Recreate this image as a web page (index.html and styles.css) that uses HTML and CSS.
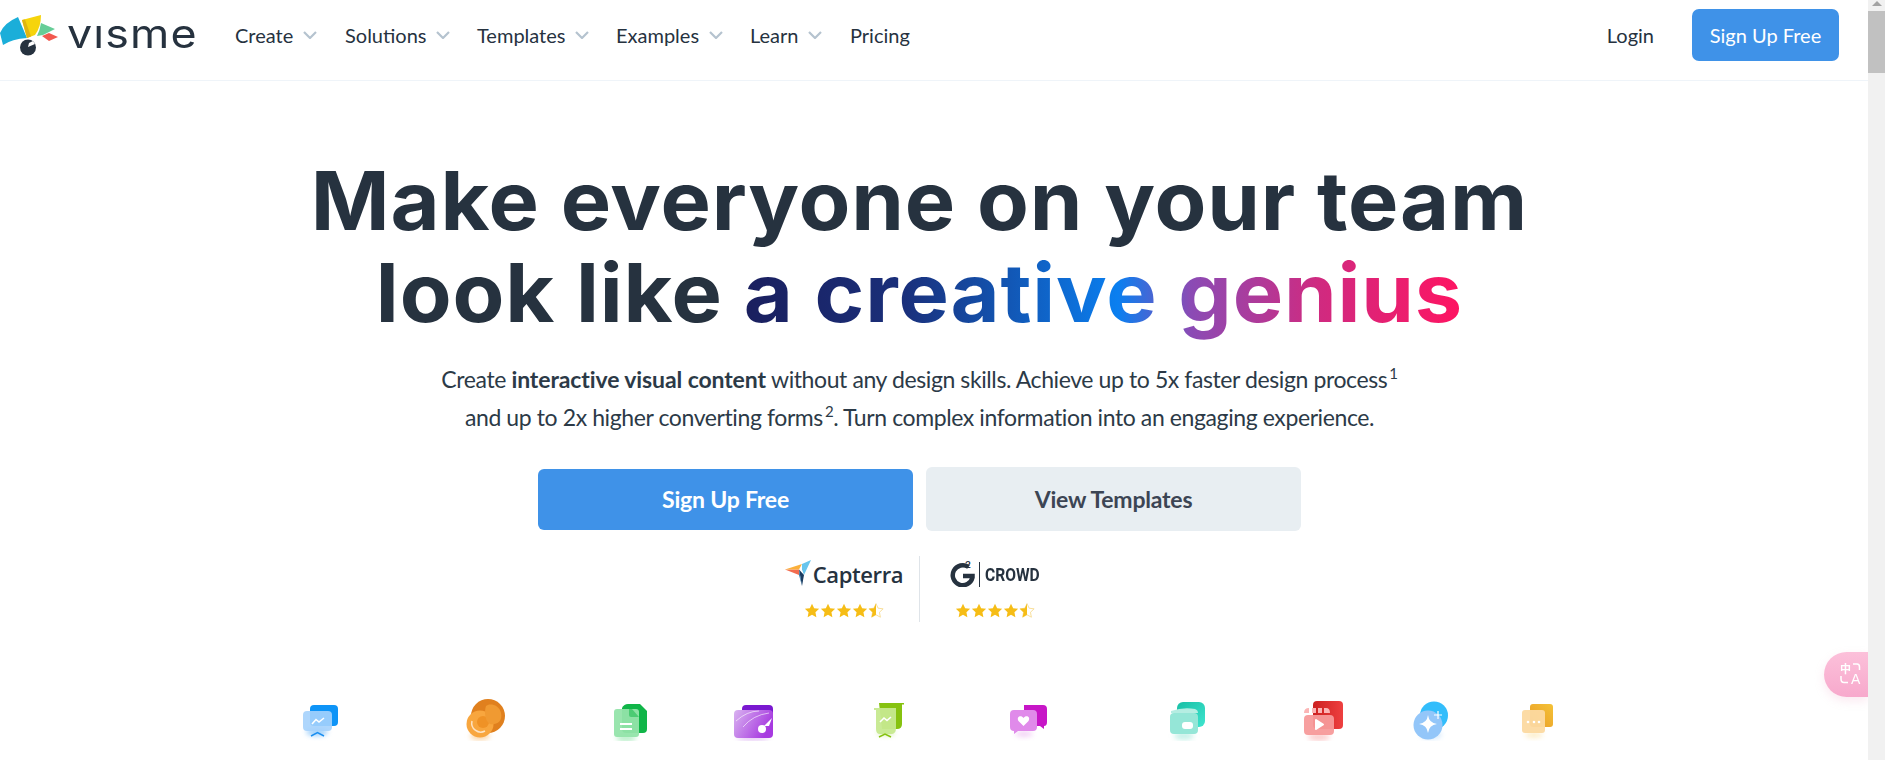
FILE: index.html
```html
<!DOCTYPE html>
<html lang="en">
<head>
<meta charset="UTF-8">
<title>Visme</title>
<link rel="stylesheet" href="styles.css">
</head>
<body>

<!-- HEADER -->
<header class="site-header">
    <a class="logo" href="#">
        <svg class="logo-mark" width="60" height="56" viewBox="0 7 60 56">
            <path d="M3 45 L0 33 Q4 23 18 17 L27 38 Q12 39 3 45Z" fill="#1baed9"/>
            <path d="M22 20 L41 15 Q41 27 35 35 L27 38Z" fill="#f6d40c"/>
            <path d="M22 20 L25 19.500 L31 36.500 L27 38Z" fill="#dfb512"/>
            <path d="M41 23 L55 29 L43 35 L37 36Q40 30 41 23Z" fill="#66cd97"/>
            <path d="M42 36 L49 33 L58 37 L49 41Z" fill="#f2594f"/>
            <circle cx="28" cy="47.500" r="8" fill="#26323f"/>
            <path d="M28 47 L35 44 L33 41 L29 43Z" fill="#fff"/>
        </svg>
        <span class="logo-text">vısme</span>
    </a>
    <nav class="main-nav">
        <a href="#" class="nav-item nav-create">Create <svg class="chev" width="14" height="8" viewBox="0 0 14 8"><path d="M1 1 L7 7 L13 1"/></svg></a>
        <a href="#" class="nav-item nav-solutions">Solutions <svg class="chev" width="14" height="8" viewBox="0 0 14 8"><path d="M1 1 L7 7 L13 1"/></svg></a>
        <a href="#" class="nav-item nav-templates">Templates <svg class="chev" width="14" height="8" viewBox="0 0 14 8"><path d="M1 1 L7 7 L13 1"/></svg></a>
        <a href="#" class="nav-item nav-examples">Examples <svg class="chev" width="14" height="8" viewBox="0 0 14 8"><path d="M1 1 L7 7 L13 1"/></svg></a>
        <a href="#" class="nav-item nav-learn">Learn <svg class="chev" width="14" height="8" viewBox="0 0 14 8"><path d="M1 1 L7 7 L13 1"/></svg></a>
        <a href="#" class="nav-item">Pricing</a>
    </nav>
    <div class="header-actions">
        <a href="#" class="login">Login</a>
        <a href="#" class="btn-small">Sign Up Free</a>
    </div>
</header>

<!-- HERO -->
<main class="hero">
    <h1 class="hero-title">Make everyone on your team<br>look like <span class="gradient-text">a creative genius</span></h1>
    <p class="hero-text">Create <b>interactive visual content</b> without any design skills. Achieve up to 5x faster design process<sup>1</sup><br>and up to 2x higher converting forms<sup>2</sup>. Turn complex information into an engaging experience.</p>

    <div class="hero-buttons">
        <a href="#" class="btn btn-blue">Sign Up Free</a>
        <a href="#" class="btn btn-grey">View Templates</a>
    </div>

    <div class="ratings">
        <div class="rating">
            <div class="rating-logo">
                <svg width="28" height="28" viewBox="0 0 28 28">
                    <path d="M0 9.500 L14 9.500 L14 15Z" fill="#f26c4f"/>
                    <path d="M0 9.500 L17 4 L14 9.500Z" fill="#fbb03b"/>
                    <path d="M17 4 L26 0 L19 15 L17 9.500Z" fill="#68c5ed"/>
                    <path d="M14 9.500 L19 15 L17 26Z" fill="#1a3c61"/>
                    <path d="M14 9.500 L14 15 L17 26Z" fill="#2a74a8"/>
                </svg>
                <span class="capterra">Capterra</span>
            </div>
            <div class="stars">
                <svg width="16" height="15" viewBox="0 0 24 24"><path class="star" d="M12 1 L15.400 8.300 L23.400 9.300 L17.500 14.800 L19 22.700 L12 18.800 L5 22.700 L6.500 14.800 L.6 9.300 L8.600 8.300Z"/></svg>
                <svg width="16" height="15" viewBox="0 0 24 24"><path class="star" d="M12 1 L15.400 8.300 L23.400 9.300 L17.500 14.800 L19 22.700 L12 18.800 L5 22.700 L6.500 14.800 L.6 9.300 L8.600 8.300Z"/></svg>
                <svg width="16" height="15" viewBox="0 0 24 24"><path class="star" d="M12 1 L15.400 8.300 L23.400 9.300 L17.500 14.800 L19 22.700 L12 18.800 L5 22.700 L6.500 14.800 L.6 9.300 L8.600 8.300Z"/></svg>
                <svg width="16" height="15" viewBox="0 0 24 24"><path class="star" d="M12 1 L15.400 8.300 L23.400 9.300 L17.500 14.800 L19 22.700 L12 18.800 L5 22.700 L6.500 14.800 L.6 9.300 L8.600 8.300Z"/></svg>
                <svg width="16" height="15" viewBox="0 0 24 24"><path class="star-empty" d="M12 1 L15.400 8.300 L23.400 9.300 L17.500 14.800 L19 22.700 L12 18.800 L5 22.700 L6.500 14.800 L.6 9.300 L8.600 8.300Z"/><path class="star" d="M12 1 L12 18.800 L5 22.700 L6.500 14.800 L.6 9.300 L8.600 8.300Z"/></svg>
            </div>
        </div>
        <div class="rating-line"></div>
        <div class="rating">
            <div class="rating-logo">
                <svg width="25" height="25" viewBox="0 0 25 25">
                    <path d="M18.500 5 A10 10 0 1 0 22.500 15.500 L22.500 14 H13" fill="none" stroke="#26323f" stroke-width="4.500"/>
                </svg>
                <span class="g2-two">2</span>
                <span class="g2-line"></span>
                <span class="crowd">CROWD</span>
            </div>
            <div class="stars">
                <svg width="16" height="15" viewBox="0 0 24 24"><path class="star" d="M12 1 L15.400 8.300 L23.400 9.300 L17.500 14.800 L19 22.700 L12 18.800 L5 22.700 L6.500 14.800 L.6 9.300 L8.600 8.300Z"/></svg>
                <svg width="16" height="15" viewBox="0 0 24 24"><path class="star" d="M12 1 L15.400 8.300 L23.400 9.300 L17.500 14.800 L19 22.700 L12 18.800 L5 22.700 L6.500 14.800 L.6 9.300 L8.600 8.300Z"/></svg>
                <svg width="16" height="15" viewBox="0 0 24 24"><path class="star" d="M12 1 L15.400 8.300 L23.400 9.300 L17.500 14.800 L19 22.700 L12 18.800 L5 22.700 L6.500 14.800 L.6 9.300 L8.600 8.300Z"/></svg>
                <svg width="16" height="15" viewBox="0 0 24 24"><path class="star" d="M12 1 L15.400 8.300 L23.400 9.300 L17.500 14.800 L19 22.700 L12 18.800 L5 22.700 L6.500 14.800 L.6 9.300 L8.600 8.300Z"/></svg>
                <svg width="16" height="15" viewBox="0 0 24 24"><path class="star-empty" d="M12 1 L15.400 8.300 L23.400 9.300 L17.500 14.800 L19 22.700 L12 18.800 L5 22.700 L6.500 14.800 L.6 9.300 L8.600 8.300Z"/><path class="star" d="M12 1 L12 18.800 L5 22.700 L6.500 14.800 L.6 9.300 L8.600 8.300Z"/></svg>
            </div>
        </div>
    </div>

    <!-- ICON TABS -->
    <div class="icon-tabs">
        <div class="tab tab1">
            <svg width="60" height="50" viewBox="0 0 60 50">
                <ellipse class="glow" cx="26" cy="41" rx="11" ry="4" fill="#9fd0fb"/>
                <rect x="19" y="14" width="28" height="21" rx="4" fill="#0e94f7"/>
                <rect x="12" y="20" width="29" height="20" rx="4" fill="#a5d2fc" opacity=".9"/>
                <path d="M21 33 L25 28.500 L28 31 L33 27" class="line-white"/>
                <path d="M20 45 L26.500 41.500 L33 45" fill="none" stroke="#1b8ff0" stroke-width="1.500"/>
            </svg>
        </div>
        <div class="tab tab2">
            <svg width="60" height="50" viewBox="0 0 60 50">
                <ellipse class="glow" cx="24" cy="45" rx="10" ry="4" fill="#fbd5a5"/>
                <circle cx="32" cy="25" r="17" fill="#e0801e"/>
                <circle cx="24" cy="33" r="13.500" fill="#f8a63e"/>
                <path d="M16 30 A9 9 0 0 0 29 40" fill="none" stroke="#fde3c3" stroke-width="1.500"/>
                <circle cx="27" cy="31" r="6" fill="#ef9226"/>
                <path d="M30 15 C33 12 43 13 45 22 C47 31 40 34 34 33 C29 31 28 20 30 15Z" fill="#f09a32"/>
            </svg>
        </div>
        <div class="tab tab3">
            <svg width="60" height="50" viewBox="0 0 60 50">
                <ellipse class="glow" cx="26" cy="47" rx="10" ry="4" fill="#bdf0cc"/>
                <path d="M28 13 H40 L47 20 V38 Q47 42 43 42 H26 Q22 42 22 38 V17 Q24 13 28 13Z" fill="#10b548"/>
                <rect x="14" y="18" width="25" height="28" rx="3" fill="#93e4aa" opacity=".95"/>
                <path d="M29 18 H32 L39 26 H31 Q29 26 29 24Z" fill="#4ccb73"/>
                <path d="M20 33 H32 M20 38 H32" stroke="#fff" stroke-width="2"/>
            </svg>
        </div>
        <div class="tab tab4">
            <svg width="60" height="50" viewBox="0 0 60 50">
                <ellipse class="glow" cx="30" cy="47" rx="16" ry="3" fill="#e6c9f5"/>
                <rect x="19" y="14" width="31" height="26" rx="4" fill="#7a18d0"/>
                <rect x="11" y="19" width="39" height="28" rx="4" fill="url(#purpleFade)"/>
                <path d="M13 30 Q24 20 36 20 M20 36 Q30 24 46 22" fill="none" stroke="#fff" stroke-width="1" opacity=".6"/>
                <circle cx="39" cy="38" r="4" fill="#fff"/>
                <path d="M41 35 L49 27 L46 35Z" fill="#fff"/>
                <defs>
                    <linearGradient id="purpleFade" x1="0" y1="0" x2="1" y2=".4">
                        <stop offset="0" stop-color="#d9b3f0"/>
                        <stop offset="1" stop-color="#a73ae0"/>
                    </linearGradient>
                </defs>
            </svg>
        </div>
        <div class="tab tab5">
            <svg width="60" height="50" viewBox="0 0 60 50">
                <ellipse class="glow" cx="28" cy="42" rx="9" ry="3" fill="#dbf0b9"/>
                <path d="M21 12 H46 V13.500 H44 V33 Q44 38 39 38 H24Z" fill="#86c20f"/>
                <path d="M16 17 H38 V19 V37 Q38 43 33 43 H22 Q18 43 18 38 V19 H16Z" fill="#c6e98f" opacity=".95"/>
                <path d="M22 31 L26 27 L29 29.500 L33 26" class="line-white"/>
                <path d="M21 46 L27 43 L33 46" fill="none" stroke="#86c20f" stroke-width="1.500"/>
            </svg>
        </div>
        <div class="tab tab6">
            <svg width="60" height="50" viewBox="0 0 60 50">
                <ellipse class="glow" cx="26" cy="43" rx="9" ry="3" fill="#f3d2f6"/>
                <path d="M26 14 H45 Q49 14 49 18 V31 Q49 35 46 35 L46 38 L42 35 H26 Z" fill="#c716c7"/>
                <path d="M16 19 H35 Q39 19 39 23 V36 Q39 40 35 40 H20 L16 43 V40 Q12 40 12 36 V23 Q12 19 16 19Z" fill="#e08aea"/>
                <path d="M25.500 35 L20.500 30 C18 26 23 23.500 25.500 27 C28 23.500 33 26 30.500 30Z" fill="#fff"/>
            </svg>
        </div>
        <div class="tab tab7">
            <svg width="60" height="50" viewBox="0 0 60 50">
                <ellipse class="glow" cx="27" cy="45" rx="10" ry="4" fill="#c8f1e9"/>
                <rect x="20" y="11" width="28" height="25" rx="6" fill="url(#tealFade)"/>
                <path d="M14 20 Q26 16 38 18 Q41 19 41 22 L14 22Z" fill="#b5ede2"/>
                <rect x="13" y="22" width="28" height="21" rx="4" fill="#95e6d7"/>
                <rect x="25" y="31" width="11" height="7" rx="3" fill="#fff"/>
                <defs>
                    <linearGradient id="tealFade" x1="0" y1="0" x2="1" y2="1">
                        <stop offset="0" stop-color="#18bfa5"/>
                        <stop offset="1" stop-color="#3fe5cf"/>
                    </linearGradient>
                </defs>
            </svg>
        </div>
        <div class="tab tab8">
            <svg width="60" height="50" viewBox="0 0 60 50">
                <ellipse class="glow" cx="29" cy="46" rx="11" ry="4" fill="#fbd0d0"/>
                <rect x="23" y="10" width="30" height="28" rx="4" fill="url(#redFade)"/>
                <path d="M14 22 Q14 17 19 17 V22Z M22 17 H26 V22 H22Z M28 17 H32 V22 H28Z M34 17 H36 Q40 17 40 22 H34Z" fill="#fbb5b5"/>
                <rect x="14" y="24" width="30" height="20" rx="4" fill="#f79a9a" opacity=".95"/>
                <path d="M26 29 L33 33.500 L26 38Z" fill="#fff" stroke="#fff" stroke-width="2" stroke-linejoin="round"/>
                <defs>
                    <linearGradient id="redFade" x1="0" y1="0" x2="1" y2="0">
                        <stop offset="0" stop-color="#cc2020"/>
                        <stop offset="1" stop-color="#ee4040"/>
                    </linearGradient>
                </defs>
            </svg>
        </div>
        <div class="tab tab9">
            <svg width="60" height="50" viewBox="0 0 60 50">
                <ellipse class="glow" cx="30" cy="44" rx="11" ry="4" fill="#d5e9fb"/>
                <circle cx="33" cy="24.500" r="14" fill="#33bdfb"/>
                <circle cx="27" cy="34" r="14.500" fill="#93c6f9"/>
                <path d="M27 24 Q28 32 36 33 Q28 34 27 42 Q26 34 18 33 Q26 32 27 24Z" fill="#fff"/>
                <path d="M37 20 V28 M33 24 H41" stroke="#fff" stroke-width="1.200"/>
            </svg>
        </div>
        <div class="tab tab10">
            <svg width="60" height="50" viewBox="0 0 60 50">
                <ellipse class="glow" cx="27" cy="44" rx="9" ry="3" fill="#fdeec9"/>
                <rect x="23" y="13" width="23" height="23" rx="3" fill="url(#amberFade)"/>
                <rect x="15" y="19" width="23" height="23" rx="3" fill="#fcd9a0" opacity=".95"/>
                <circle cx="21" cy="31" r="1.300" fill="#fff"/>
                <circle cx="27" cy="31" r="1.300" fill="#fff"/>
                <circle cx="32" cy="31" r="1.300" fill="#fff"/>
                <defs>
                    <linearGradient id="amberFade" x1="0" y1="1" x2="1" y2="0">
                        <stop offset="0" stop-color="#e99a25"/>
                        <stop offset="1" stop-color="#f4c237"/>
                    </linearGradient>
                </defs>
            </svg>
        </div>
    </div>
</main>

<!-- Translate bubble -->
<div class="translate-bubble">
    <span class="zh">中</span><span class="en">A</span>
    <svg class="translate-arcs" width="44" height="45" viewBox="0 0 44 45">
        <path d="M29 12 H33 Q35.500 12 35.500 15 V18 M17 24 V27 Q17 30.500 20 30.500 H24" fill="none" stroke="#fff" stroke-width="1.500"/>
    </svg>
</div>

<!-- Browser scrollbar -->
<div class="scrollbar">
    <span class="scroll-arrow"></span>
    <span class="scroll-thumb"></span>
</div>

</body>
</html>
```

FILE: styles.css
```css
* {
    box-sizing: border-box;
}
html, body {
    height: 100%;
}
body {
    margin: 0;
    padding-right: 17px;
    overflow: hidden;
    background: #fff;
    font-family: "Lato", Arial, sans-serif;
    color: #26323f;
}
a {
    color: inherit;
    text-decoration: none;
}

/* header */
.site-header {
    display: flex;
    align-items: center;
    height: 81px;
    padding-bottom: 10px;
    border-bottom: 1px solid #eff4f9;
}
.logo {
    display: flex;
    align-items: center;
    width: 235px;
    height: 70px;
}
.logo-mark {
    flex: none;
}
.logo-text {
    display: inline-block;
    margin-left: 7px;
    margin-top: -3px;
    font-family: "Inter", sans-serif;
    font-size: 40px;
    font-weight: 400;
    letter-spacing: 1px;
    line-height: 1;
    color: #26323f;
    transform: scaleX(1.12);
    transform-origin: left;
}
.main-nav {
    display: flex;
    align-items: center;
}
.nav-item {
    display: flex;
    align-items: center;
    gap: 10px;
    font-size: 20px;
}
.nav-create { width: 110px; }
.nav-solutions { width: 132px; }
.nav-templates { width: 139px; }
.nav-examples { width: 134px; }
.nav-learn { width: 100px; }
.chev {
    fill: none;
    stroke: #b5c3cf;
    stroke-width: 2.2;
}
.header-actions {
    display: flex;
    align-items: center;
    margin-left: auto;
    margin-right: 29px;
}
.login {
    margin-right: 38px;
    font-size: 20px;
}
.btn-small {
    display: flex;
    align-items: center;
    justify-content: center;
    width: 147px;
    height: 52px;
    border-radius: 7px;
    background: #3f92e8;
    color: #fff;
    font-size: 20px;
}

/* hero */
.hero {
    display: flex;
    flex-direction: column;
    align-items: center;
    padding-right: 29px;
}
.hero-title {
    margin: 74px 0 0;
    font-family: "Inter", sans-serif;
    font-size: 81px;
    font-weight: 700;
    line-height: 92px;
    letter-spacing: .8px;
    text-align: center;
    color: #26323f;
    transform: scaleX(1.045);
}
.gradient-text {
    background: linear-gradient(90deg, #1a1f5e 0%, #1a2f7a 22%, #0a7ff0 52%, #8a4bb5 62%, #d02a80 80%, #ff1461 100%);
    -webkit-background-clip: text;
    background-clip: text;
    color: transparent;
}
.hero-text {
    margin: 21px 0 0;
    font-size: 23px;
    line-height: 38px;
    letter-spacing: -.4px;
    text-align: center;
    color: #2c3a47;
}
.hero-text b {
    letter-spacing: -.1px;
}
.hero-text sup {
    font-size: 15px;
    line-height: 0;
    margin-left: 2px;
}
.hero-buttons {
    display: flex;
    align-items: center;
    gap: 13px;
    margin-top: 31px;
}
.btn {
    display: flex;
    align-items: center;
    justify-content: center;
    width: 375px;
    border-radius: 6px;
    font-size: 23px;
    font-weight: 700;
    letter-spacing: -.2px;
}
.btn-blue {
    height: 61px;
    background: #3f92e8;
    color: #fff;
}
.btn-grey {
    height: 64px;
    background: #e8eef2;
    color: #3c4554;
}

/* ratings */
.ratings {
    display: flex;
    align-items: stretch;
    margin-top: 25px;
}
.rating {
    display: flex;
    flex-direction: column;
    align-items: center;
    width: 150px;
}
.rating-logo {
    display: flex;
    align-items: center;
    position: relative;
    height: 36px;
}
.capterra {
    font-family: "Open Sans", sans-serif;
    font-size: 22px;
    font-weight: 600;
    letter-spacing: -.4px;
    color: #26323f;
}
.g2-two {
    position: absolute;
    left: 15px;
    top: 2px;
    font-size: 10px;
    font-weight: 700;
}
.g2-line {
    width: 1px;
    height: 25px;
    margin: 0 5px 0 4px;
    background: #26323f;
}
.crowd {
    display: inline-block;
    width: 55px;
    font-family: "Roboto", sans-serif;
    font-size: 19px;
    font-weight: 700;
    color: #26323f;
    white-space: nowrap;
    transform: scaleX(.82);
    transform-origin: left;
}
.stars {
    display: flex;
    margin-top: 11px;
}
.star {
    fill: #f6bd16;
}
.star-empty {
    fill: #fff;
    stroke: #f8dd94;
    stroke-width: 1.500;
}
.rating-line {
    width: 1px;
    height: 66px;
    background: #dfe4e9;
}

/* icon row */
.icon-tabs {
    display: flex;
    align-self: flex-start;
    margin-top: 69px;
    margin-left: 241px;
}
.tab {
    display: flex;
    justify-content: center;
    height: 50px;
}
.tab1 { width: 160px; }
.tab2 { width: 170px; }
.tab3 { width: 118px; }
.tab4 { width: 128px; }
.tab5 { width: 142px; }
.tab6 { width: 138px; }
.tab7 { width: 180px; }
.tab8 { width: 86px; }
.tab9 { width: 136px; }
.tab10 { width: 76px; }
.glow {
    filter: blur(2.5px);
}
.line-white {
    fill: none;
    stroke: #fff;
    stroke-width: 1.600;
}

/* floating translate button */
.translate-bubble {
    position: fixed;
    right: 17px;
    top: 652px;
    width: 44px;
    height: 45px;
    border-radius: 23px 0 0 23px;
    background: linear-gradient(180deg, #fcc0da, #f7a9cc);
    box-shadow: 0 4px 10px rgba(240, 170, 200, .25);
    color: #fff;
}
.translate-arcs {
    position: absolute;
    left: 0;
    top: 0;
}
.zh {
    position: absolute;
    left: 16px;
    top: 9px;
    font-family: "Noto Sans CJK SC", sans-serif;
    font-size: 11px;
    font-weight: 700;
    line-height: 14px;
}
.en {
    position: absolute;
    left: 27px;
    top: 19px;
    font-family: "Liberation Sans", sans-serif;
    font-size: 14px;
    line-height: 16px;
}

/* fake browser scrollbar */
.scrollbar {
    position: fixed;
    top: 0;
    right: 0;
    width: 17px;
    height: 100%;
    background: #f1f1f1;
}
.scroll-arrow {
    display: block;
    width: 0;
    margin: 1px auto 0;
    border: 5px solid transparent;
    border-top: 0;
    border-bottom-color: #a3a3a3;
}
.scroll-thumb {
    display: block;
    height: 62px;
    margin-top: 5px;
    background: #c1c1c1;
}
```
